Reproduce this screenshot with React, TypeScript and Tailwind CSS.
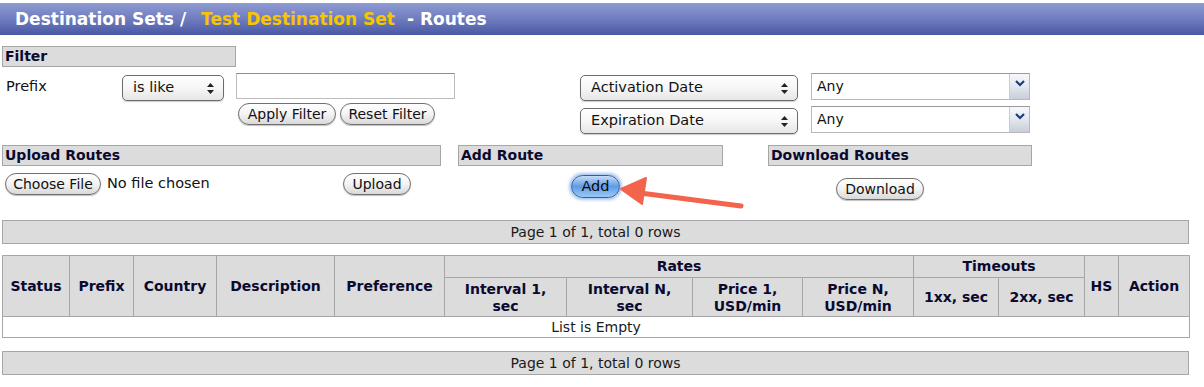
import type { ReactNode } from "react";

const FONT = "font-['DejaVu_Sans',Verdana,sans-serif]";

function SectionHead({ children, className = "" }: { children: ReactNode; className?: string }) {
  return (
    <div
      className={`flex h-[21px] items-center border border-[#a6a6a6] bg-[#dcdcdc] px-[2px] text-[14px] font-bold text-[#0a0a30] ${className}`}
    >
      {children}
    </div>
  );
}

function AquaButton({ children, className = "" }: { children: ReactNode; className?: string }) {
  return (
    <button
      type="button"
      className={`flex h-[22px] items-center justify-center rounded-full border border-[#707070] bg-gradient-to-b from-white via-[#f3f3f3] to-[#d9d9d9] px-[8px] text-[14px] leading-none whitespace-nowrap text-[#111] shadow-[0_1px_1px_rgba(0,0,0,0.25)] ${className}`}
    >
      {children}
    </button>
  );
}

function UpDown() {
  return (
    <svg width="7" height="11" viewBox="0 0 7 11" className="shrink-0">
      <path d="M3.5 0 L7 4 L0 4 Z" fill="#222" />
      <path d="M3.5 11 L7 7 L0 7 Z" fill="#222" />
    </svg>
  );
}

function MacSelect({ label, className = "" }: { label: string; className?: string }) {
  return (
    <div
      className={`flex h-[26px] items-center justify-between rounded-[5px] border border-[#6c6c6c] bg-gradient-to-b from-white via-[#f6f6f6] to-[#e6e6e6] pl-[10px] pr-[9px] text-[14.5px] text-[#111] shadow-[0_1px_1px_rgba(0,0,0,0.2)] ${className}`}
    >
      <span>{label}</span>
      <UpDown />
    </div>
  );
}

function Combo({ value }: { value: string }) {
  return (
    <div className="flex h-[27px] w-[219px] border border-[#b9b9b9] border-t-[#9a9a9a] bg-white text-[14px] text-[#111]">
      <div className="flex flex-1 items-center pl-[5px]">{value}</div>
      <div className="flex w-[20px] items-start justify-center border-l border-[#c8ccd6] bg-gradient-to-b from-[#f7f8fb] via-[#e3e7ee] to-[#c7cedb] pt-[6px]">
        <svg width="10" height="7" viewBox="0 0 10 7">
          <path d="M1 1 L5 5 L9 1" fill="none" stroke="#1d3b7c" strokeWidth="2.2" />
        </svg>
      </div>
    </div>
  );
}

function PageBar() {
  return (
    <div className="flex h-[24px] items-center justify-center border border-[#a6a6a6] bg-[#dcdcdc] text-[14px] text-[#1a1a1a]">
      Page 1 of 1, total 0 rows
    </div>
  );
}

const th = "border border-[#a6a6a6] bg-[#dcdcdc] px-1 text-center text-[14px] font-bold leading-[17px] text-[#0a0a30]";

export default function App() {
  return (
    <div className={`relative min-h-[387px] w-[1204px] bg-white ${FONT}`}>
      <div className="pt-[3px]">
        <div className="flex h-[32px] items-center bg-gradient-to-b from-[#8f9bd2] via-[#6f7cbe] to-[#4a58a6] pl-[15px] pt-[2px] text-[17px] font-bold text-white">
          <span>Destination Sets /</span>
          <span className="ml-[15px] text-[#f7c600]">Test Destination Set</span>
          <span className="ml-[12px]">- Routes</span>
        </div>
      </div>

      <div className="w-[1189px] pl-[2px]">
        <SectionHead className="mt-[11px] w-[234px]">Filter</SectionHead>

        <div className="flex">
          <div className="flex w-[578px]">
            <div className="w-[120px] pl-[4px] pt-[9px] text-[14.5px] text-[#111]">Prefix</div>
            <MacSelect label="is like" className="mt-[8px] w-[102px]" />
            <div className="ml-[12px] mt-[6px] flex flex-col">
              <div className="h-[26px] w-[219px] border border-[#bcbcbc] border-t-[#8e8e8e] bg-white" />
              <div className="mt-[4px] flex gap-[4px] pl-[2px]">
                <AquaButton className="w-[98px]">Apply Filter</AquaButton>
                <AquaButton className="w-[95px]">Reset Filter</AquaButton>
              </div>
            </div>
          </div>
          <div className="mt-[6px] flex flex-col gap-[5px]">
            <div className="flex items-start gap-[13px]">
              <MacSelect label="Activation Date" className="mt-[2px] w-[218px]" />
              <Combo value="Any" />
            </div>
            <div className="flex items-start gap-[13px]">
              <MacSelect label="Expiration Date" className="mt-[2px] w-[218px]" />
              <Combo value="Any" />
            </div>
          </div>
        </div>

        <div className="mt-[11px] flex">
          <div className="w-[439px]">
            <SectionHead>Upload Routes</SectionHead>
            <div className="mt-[7px] flex items-center">
              <AquaButton className="ml-[3px] w-[96px]">Choose File</AquaButton>
              <span className="ml-[6px] text-[14.5px] text-[#111]">No file chosen</span>
              <AquaButton className="ml-auto mr-[30px] w-[68px]">Upload</AquaButton>
            </div>
          </div>
          <div className="ml-[17px] w-[265px]">
            <SectionHead>Add Route</SectionHead>
            <div className="mt-[9px] flex justify-center pl-[10px]">
              <button
                type="button"
                className="flex h-[23px] w-[49px] items-center justify-center rounded-full border border-[#2f5d9e] bg-gradient-to-b from-[#c4dcf7] via-[#5f9be3] to-[#9ccaf5] text-[14.5px] leading-none text-[#0b0b0b] shadow-[0_0_3px_2px_rgba(90,150,230,0.55)]"
              >
                Add
              </button>
            </div>
          </div>
          <div className="ml-[45px] w-[264px]">
            <SectionHead>Download Routes</SectionHead>
            <div className="mt-[12px] flex pl-[68px]">
              <AquaButton className="w-[88px]">Download</AquaButton>
            </div>
          </div>
        </div>

        <div className="mt-[20px]">
          <PageBar />
        </div>

        <table className="mt-[11px] w-[1187px] table-fixed border-collapse">
          <colgroup>
            <col className="w-[67px]" />
            <col className="w-[64px]" />
            <col className="w-[83px]" />
            <col className="w-[118px]" />
            <col className="w-[110px]" />
            <col className="w-[122px]" />
            <col className="w-[126px]" />
            <col className="w-[110px]" />
            <col className="w-[111px]" />
            <col className="w-[85px]" />
            <col className="w-[86px]" />
            <col className="w-[34px]" />
            <col className="w-[71px]" />
          </colgroup>
          <thead>
            <tr className="h-[22px]">
              <th rowSpan={2} className={th}>Status</th>
              <th rowSpan={2} className={th}>Prefix</th>
              <th rowSpan={2} className={th}>Country</th>
              <th rowSpan={2} className={th}>Description</th>
              <th rowSpan={2} className={th}>Preference</th>
              <th colSpan={4} className={th}>Rates</th>
              <th colSpan={2} className={th}>Timeouts</th>
              <th rowSpan={2} className={th}>HS</th>
              <th rowSpan={2} className={th}>Action</th>
            </tr>
            <tr className="h-[39px]">
              <th className={`${th} pt-[2px]`}>Interval 1,<br />sec</th>
              <th className={`${th} pt-[2px]`}>Interval N,<br />sec</th>
              <th className={`${th} pt-[2px]`}>Price 1,<br />USD/min</th>
              <th className={`${th} pt-[2px]`}>Price N,<br />USD/min</th>
              <th className={th}>1xx, sec</th>
              <th className={th}>2xx, sec</th>
            </tr>
          </thead>
          <tbody>
            <tr className="h-[21px]">
              <td colSpan={13} className="border border-[#a6a6a6] text-center text-[14px] leading-[17px] text-[#1a1a1a]">
                List is Empty
              </td>
            </tr>
          </tbody>
        </table>

        <div className="mt-[13px]">
          <PageBar />
        </div>
      </div>

      <svg
        className="pointer-events-none absolute left-0 top-0"
        width="1204"
        height="387"
        viewBox="0 0 1204 387"
      >
        <line x1="741" y1="206" x2="640" y2="193" stroke="#f2644c" strokeWidth="5" strokeLinecap="round" />
        <path d="M621 189 L646 178 L642 204 Z" fill="#f2644c" stroke="#f2644c" strokeWidth="2" strokeLinejoin="round" />
      </svg>
    </div>
  );
}
